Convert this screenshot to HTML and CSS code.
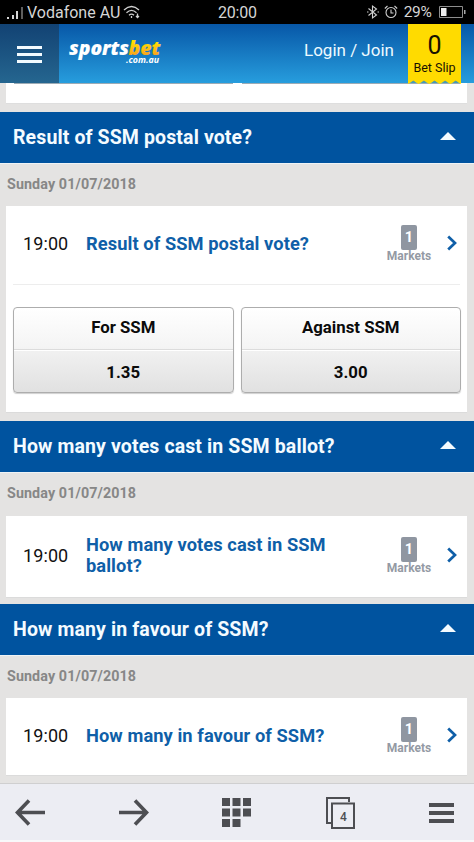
FILE: index.html
```html
<!DOCTYPE html>
<html lang="en">
<head>
<meta charset="utf-8">
<title>Sportsbet</title>
<link rel="stylesheet" href="styles.css">
</head>
<body>
<div class="status">
  <svg class="signal" width="18" height="14" viewBox="0 0 18 14"><path d="M0 11h2v2H0zM5 9h2v4H5zM9 5h2v8H9z" fill="#d5d5d5"/><path d="M14 1h2v12h-2z" fill="#5e5e5e"/></svg>
  <span class="carrier">Vodafone AU</span>
  <svg class="wifi" width="18" height="14" viewBox="0 0 18 14" fill="none" stroke="#cfcfcf" stroke-width="1.3"><path d="M1 5Q8.500-2 16 5M3.500 7.700Q8.500 3 13.500 7.700M6 10.300Q8.500 8 11 10.300"/><path d="M8.500 11v2M14.500 8.500v4M13 11l1.500 1.500L16 11"/></svg>
  <span class="clock">20:00</span>
  <svg class="bt" width="12" height="14" viewBox="0 0 12 14" fill="none" stroke="#cfcfcf" stroke-width="1.1"><path d="M1.500 3.500l8 6.500-4 3V1l4 3-8 6.500"/><path d="M0 7h1.500M10.500 7H12"/></svg>
  <svg class="alarm" width="14" height="14" viewBox="0 0 14 14" fill="none" stroke="#cfcfcf" stroke-width="1.1"><circle cx="7" cy="7.500" r="5"/><path d="M7 4.500v3.500h2.500M.8 3.500L3.500 1M13.200 3.500L10.500 1"/></svg>
  <span class="percent">29%</span>
  <svg class="battery" width="27" height="13" viewBox="0 0 27 13"><path d="M.5.500h23v11H.5z" fill="none" stroke="#8d8d8d"/><path d="M2 2h5.500v8H2z" fill="#eee"/><path d="M25 4h1.500v4H25z" fill="#aaa"/></svg>
</div>

<header class="header">
  <div class="menu"><i></i><i></i><i></i></div>
  <div class="logo">
    <svg width="96" height="40" viewBox="0 0 96 40">
      <defs><linearGradient id="gold" x1="0" y1="0" x2="0" y2="1"><stop offset=".3" stop-color="#ffdf00"/><stop offset=".8" stop-color="#f9a020"/></linearGradient></defs>
      <text class="brand" x="1" y="23" textLength="60" lengthAdjust="spacingAndGlyphs" fill="#fff" stroke="#fff">sports</text>
      <text class="brand" x="60.500" y="23" textLength="32" lengthAdjust="spacingAndGlyphs" fill="url(#gold)" stroke="url(#gold)">bet</text>
      <text class="domain" x="58" y="30.500" textLength="33" lengthAdjust="spacingAndGlyphs">.com.au</text>
    </svg>
  </div>
  <div class="login">Login / Join</div>
  <div class="slip">
    <span class="count">0</span>
    <span class="label">Bet Slip</span>
    <svg width="53" height="5" viewBox="0 0 53 5"><path d="M0 0v4l5.300-3 5.300 3 5.300-3 5.300 3 5.300-3 5.300 3 5.300-3 5.300 3 5.300-3L53 4V0z" fill="#ffdb00"/><path d="M2.700 2.500L5.300.500l2.600 2zM13.300 2.500l2.600-2 2.600 2zM23.900 2.500l2.600-2 2.600 2zM34.500 2.500l2.600-2 2.600 2zM45.100 2.500l2.600-2 2.600 2z" fill="#5b9a9c"/></svg>
  </div>
</header>

<main>
  <div class="tail"><i></i><i></i></div>

  <section>
    <h2><span>Result of SSM postal vote?</span><b></b></h2>
    <p class="date">Sunday 01/07/2018</p>
    <div class="card tall">
      <div class="event">
        <time>19:00</time><a>Result of SSM postal vote?</a>
        <div class="markets"><span>1</span><small>Markets</small></div>
        <svg class="chev" width="10" height="16" viewBox="0 0 10 16"><path d="M1.200 1.500L8 8l-6.800 6.500"/></svg>
      </div>
      <div class="odds">
        <button><span>For SSM</span><span>1.35</span></button>
        <button><span>Against SSM</span><span>3.00</span></button>
      </div>
    </div>
  </section>

  <section>
    <h2><span>How many votes cast in SSM ballot?</span><b></b></h2>
    <p class="date">Sunday 01/07/2018</p>
    <div class="card middle">
      <div class="event">
        <time>19:00</time><a class="wrap">How many votes cast in SSM ballot?</a>
        <div class="markets"><span>1</span><small>Markets</small></div>
        <svg class="chev" width="10" height="16" viewBox="0 0 10 16"><path d="M1.200 1.500L8 8l-6.800 6.500"/></svg>
      </div>
    </div>
  </section>

  <section>
    <h2><span>How many in favour of SSM?</span><b></b></h2>
    <p class="date">Sunday 01/07/2018</p>
    <div class="card last">
      <div class="event">
        <time>19:00</time><a>How many in favour of SSM?</a>
        <div class="markets"><span>1</span><small>Markets</small></div>
        <svg class="chev" width="10" height="16" viewBox="0 0 10 16"><path d="M1.200 1.500L8 8l-6.800 6.500"/></svg>
      </div>
    </div>
  </section>
</main>

<nav class="toolbar">
  <svg width="30" height="26" viewBox="0 0 30 26" fill="none" stroke="#4d4e52" stroke-width="3.600"><path d="M30 12.500H2.500M14 .500L2.500 12.500 14 24.500"/></svg>
  <svg width="30" height="26" viewBox="0 0 30 26" fill="none" stroke="#4d4e52" stroke-width="3.600"><path d="M0 12.500h27.500M16 .500l11.500 12L16 24.500"/></svg>
  <svg width="30" height="30" viewBox="0 0 30 30" fill="#4d4e52"><path d="M0 0h8v8H0zM10.500 0h8v8h-8zM21 0h8v8h-8zM0 10.500h8v8H0zM10.500 10.500h8v8h-8zM21 10.500h8v8h-8zM0 21h8v8H0zM10.500 21h8v8h-8z"/></svg>
  <svg width="30" height="32" viewBox="0 0 30 32" fill="none" stroke="#4d4e52" stroke-width="2"><path d="M5 26H1V1h22v4"/><path d="M6 6.500h22V31H6z"/><text x="17.500" y="24" class="tabs">4</text></svg>
  <svg width="25" height="20" viewBox="0 0 25 20" fill="#4d4e52"><path d="M0 0h25v4H0zM0 8h25v4H0zM0 16h25v4H0z"/></svg>
</nav>
</body>
</html>
```
FILE: styles.css
```css
* { box-sizing: border-box; }
html, body { margin: 0; }
body {
  width: 474px; height: 842px; overflow: hidden;
  display: flex; flex-direction: column;
  background: #e4e3e2;
  font-family: Roboto, "Liberation Sans", sans-serif;
  color: #111;
}
svg { display: block; flex: none; overflow: visible; }
span, a, time { white-space: nowrap; }

.status {
  height: 24px; flex: none; background: #000; color: #d5d5d5;
  display: flex; align-items: center; padding: 0 8px 0 7px; font-size: 16px;
}
.signal { margin-top: 1px; width: 18px; }
.carrier { margin-left: 2px; width: 92px; letter-spacing: 0; }
.wifi { margin-left: 4px; }
.clock { margin-left: 77px; width: 42px; font-size: 16px; letter-spacing: -.2px; }
.bt { margin-left: 108px; }
.alarm { margin-left: 5px; }
.percent { margin-left: 6px; width: 29px; font-size: 15.500px; letter-spacing: -.4px; }
.battery { margin-left: 7px; }

.header {
  height: 59px; flex: none; display: flex; position: relative; z-index: 1;
  background: linear-gradient(#0757a7, #279ddd);
}
.menu {
  width: 59px; height: 59px; padding-top: 22px;
  display: flex; flex-direction: column; align-items: center; gap: 4px;
  background: linear-gradient(#124273, #256690);
}
.menu i { width: 25px; height: 3px; background: #f3fbff; }
.logo { padding: 8px 0 0 9px; width: 245px; }
.brand { font: italic 800 20px "Open Sans", sans-serif; stroke-width: .1px; }
.domain { font: italic 700 9.500px "Open Sans", sans-serif; fill: #fff; }
.login { width: 104px; line-height: 53px; font-size: 17px; color: #eefaff; letter-spacing: 0; white-space: nowrap; }
.slip {
  width: 53px; height: 61px; background: linear-gradient(#ffdb00, #ffdb00) 0 0 / 100% 57px no-repeat; color: #171100;
  display: flex; flex-direction: column; align-items: center;
}
.count { font-size: 25px; line-height: 29px; height: 35px; padding-top: 7px; }
.label { font-size: 12.500px; line-height: 17px; height: 22px; }

.tail {
  height: 21px; margin: 0 7px 8px 6px; padding: 0 7px 0 8px;
  background: #fff; border-bottom: 1px solid #dedede;
  display: flex; gap: 9px;
}
.tail i { flex: 1; height: 1px; background: #9cabb5; }

h2 {
  height: 51px; margin: 0; padding: 0 18px 0 13px;
  display: flex; justify-content: space-between; align-items: center;
  background: #00539f; color: #f4fbff;
  font-size: 19.500px; font-weight: 700; letter-spacing: .12px;
}
h2 b { border: 8px solid transparent; border-top: 0; border-bottom: 8px solid #f4fbff; margin-top: -3px; }
.date {
  height: 43px; margin: 0; padding: 0 0 0 7px; line-height: 41px;
  border-top: 1px solid #eef3f6;
  font-size: 14.300px; font-weight: 700; letter-spacing: .1px; color: #878787;
}
.card { margin: 0 7px 8px 6px; background: #fff; border-bottom: 1px solid #dbdbdb; }
.tall { height: 207px; }
.middle { height: 82px; margin-top: 1px; margin-bottom: 6px; }
.last { height: 78px; }
.event { height: 100%; display: flex; align-items: center; padding: 0 10px 3px 17px; }
.tall .event { height: 79px; padding: 0 3px 4px 10px; margin: 0 7px; border-bottom: 1px solid #ededed; }
time { width: 63px; font-size: 18px; letter-spacing: .1px; }
.event a { flex: 1; font-size: 18.300px; line-height: 21px; font-weight: 700; letter-spacing: .07px; color: #0f5fa8; }
.event .wrap { white-space: normal; padding-right: 50px; }
.markets { width: 46px; padding-top: 1px; display: flex; flex-direction: column; align-items: center; }
.markets span {
  width: 16px; height: 25px; border-radius: 2px; background: #8f96a1; color: #fff;
  font-size: 14.500px; font-weight: 700; line-height: 25px; text-align: center;
}
.markets small { font-size: 12px; line-height: 12px; font-weight: 700; color: #949aa4; }
.chev { margin-left: 15px; fill: none; stroke: #0f5fa8; stroke-width: 2.700px; }

.odds { display: flex; gap: 7px; padding: 22px 6px 0 7px; }
.odds button {
  flex: 1; height: 86px; padding: 0; border: 1px solid #adadad; border-radius: 4px; overflow: hidden;
  background: linear-gradient(#fff, #f4f4f4 48%, #f1f1f1 50%, #e1e1e1);
  font: 700 16.800px Roboto, sans-serif; color: #0b0b0b;
  display: flex; flex-direction: column; box-shadow: 0 1px 1px #d0d0d0;
}
.odds span { width: 100%; height: 41px; line-height: 39px; }
.odds span + span { line-height: 44px; border-top: 1px solid #dcdcdc; box-shadow: inset 0 1px #fff; }

.toolbar {
  position: absolute; top: 783px; width: 474px; height: 59px;
  background: #ecedf3; border-top: 1px solid #cfcfd0; border-bottom: 2px solid #f8f8fa;
  display: flex; align-items: center; justify-content: space-between; padding: 1px 20px 0 15px;
}
.tabs { font: 500 12px Roboto, sans-serif; fill: #4d4e52; stroke: none; text-anchor: middle; }
```
